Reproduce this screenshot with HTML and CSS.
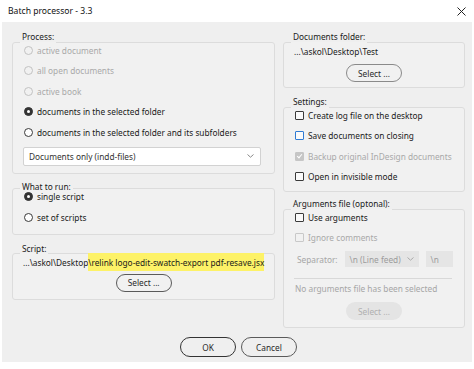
FILE: index.html
```html
<!DOCTYPE html>
<html lang="en">
  <head>
    <meta charset="UTF-8" />
    <title>Batch processor - 3.3</title>
    <link rel="stylesheet" href="styles.css">
  </head>
  <body>
    <div class="window">
      <div class="titlebar">
        <span class="title">Batch processor - 3.3</span>
        <svg class="close" width="9" height="9" viewBox="0 0 9 9">
          <path d="M0.5 0.5 L8.5 8.5 M8.5 0.5 L0.5 8.5" stroke="#222" stroke-width="1" fill="none" />
        </svg>
      </div>
      <div class="dialog">
        <div class="columns">
          <div class="col">
            <fieldset class="panel process">
              <legend>Process:</legend>
              <div class="row disabled"><span class="radio"></span>active document</div>
              <div class="row disabled"><span class="radio"></span>all open documents</div>
              <div class="row disabled"><span class="radio"></span>active book</div>
              <div class="row"><span class="radio checked"></span>documents in the selected folder</div>
              <div class="row"><span class="radio"></span>documents in the selected folder and its subfolders</div>
              <div class="dropdown">
                <span>Documents only (indd-files)</span>
                <svg class="chevron" width="7" height="4" viewBox="0 0 7 4"><path d="M0.5 0.5 L3.5 3.2 L6.5 0.5" stroke="#888" fill="none" /></svg>
              </div>
            </fieldset>

            <fieldset class="panel run">
              <legend>What to run:</legend>
              <div class="row"><span class="radio checked"></span>single script</div>
              <div class="row"><span class="radio"></span>set of scripts</div>
            </fieldset>

            <fieldset class="panel script">
              <legend>Script:</legend>
              <div class="path">...\askol\Desktop<mark>\relink logo-edit-swatch-export pdf-resave.jsx</mark></div>
              <div class="center"><button class="btn">Select ...</button></div>
            </fieldset>
          </div>

          <div class="col">
            <fieldset class="panel docs">
              <legend>Documents folder:</legend>
              <div class="path">...\askol\Desktop\Test</div>
              <div class="center"><button class="btn light">Select ...</button></div>
            </fieldset>

            <fieldset class="panel settings">
              <legend>Settings:</legend>
              <div class="row"><span class="check"></span>Create log file on the desktop</div>
              <div class="row"><span class="check focus"></span>Save documents on closing</div>
              <div class="row disabled"><span class="check checked"></span>Backup original InDesign documents</div>
              <div class="row"><span class="check"></span>Open in invisible mode</div>
            </fieldset>

            <fieldset class="panel args">
              <legend>Arguments file (optonal):</legend>
              <div class="row"><span class="check"></span>Use arguments</div>
              <div class="row disabled"><span class="check"></span>Ignore comments</div>
              <div class="sep-row">
                <span class="muted">Separator:</span>
                <span class="field select-off">\n (Line feed)
                  <svg class="chevron" width="7" height="4" viewBox="0 0 7 4"><path d="M0.5 0.5 L3.5 3.2 L6.5 0.5" stroke="#aaa" fill="none" /></svg>
                </span>
                <span class="field small-off">\n</span>
              </div>
              <div class="rule"></div>
              <div class="muted note">No arguments file has been selected</div>
              <div class="center"><button class="btn off">Select ...</button></div>
            </fieldset>
          </div>
        </div>
        <div class="footer">
          <button class="btn default">OK</button>
          <button class="btn">Cancel</button>
        </div>
      </div>
    </div>
  </body>
</html>
```

FILE: styles.css
```css
* {
  margin: 0;
  padding: 0;
  box-sizing: border-box;
}
body {
  background-color: #fff;
  font-family: "Noto Sans", "Open Sans", sans-serif;
  font-size: 8.3px;
  color: #1a1a1a;
}
.window {
  width: 474px;
  height: 369px;
  background-color: #fff;
}
.titlebar {
  height: 22px;
  display: flex;
  align-items: center;
  justify-content: space-between;
  padding: 0 8px 0 8px;
}
.title {
  font-size: 8.6px;
  color: #111;
}
.dialog {
  margin: 0 2px;
  height: 340px;
  background-color: #efefef;
  padding: 9px 7px 0 10px;
}
.columns {
  display: grid;
  grid-template-columns: 263px 182px;
  column-gap: 8px;
  align-items: start;
}
.col {
  display: flex;
  flex-direction: column;
  gap: 8px;
}
.panel {
  border: 1px solid #dcdcdc;
  border-radius: 3px;
  background-color: #f1f1f1;
  padding: 0 10px 6px 10px;
}
legend {
  margin-left: -3px;
  margin-bottom: -13px;
  padding: 0 2px 10px 2px;
  line-height: 12px;
  color: #1a1a1a;
}
.row {
  height: 20.5px;
  display: flex;
  align-items: center;
  gap: 4px;
  white-space: nowrap;
}
.disabled {
  color: #a9a9a9;
}
.radio {
  width: 9px;
  height: 9px;
  border: 1px solid #3a3a3a;
  border-radius: 50%;
  background-color: #fff;
  flex: none;
  margin-left: 1px;
}
.disabled .radio {
  border-color: #c2c2c2;
  background-color: transparent;
}
.radio.checked {
  background-color: #333;
  border-color: #333;
  position: relative;
}
.radio.checked::after {
  content: "";
  position: absolute;
  left: 2px;
  top: 2px;
  width: 3px;
  height: 3px;
  border-radius: 50%;
  background-color: #fff;
}
.check {
  width: 9px;
  height: 9px;
  border: 1px solid #3a3a3a;
  border-radius: 1px;
  background-color: #fafafa;
  flex: none;
  margin-left: 1px;
}
.check.focus {
  border-color: #2f7bd3;
}
.disabled .check {
  border-color: #c8c8c8;
  background-color: transparent;
}
.disabled .check.checked {
  background-color: #c6c6c6;
  border-color: #c6c6c6;
  position: relative;
}
.check.checked::after {
  content: "";
  position: absolute;
  left: 2px;
  top: 0px;
  width: 2px;
  height: 4px;
  border: solid #fff;
  border-width: 0 1.5px 1.5px 0;
  transform: rotate(40deg);
}
.dropdown {
  margin: 4px 3px 1px 0;
  height: 19px;
  background-color: #fff;
  border: 1px solid #d2d2d2;
  border-radius: 2px;
  display: flex;
  align-items: center;
  justify-content: space-between;
  padding: 0 6px 0 5px;
  color: #333;
}
.run legend {
  padding-bottom: 4px;
  margin-bottom: -10px;
}
.run {
  margin-top: -1px;
  padding-bottom: 6px;
}
.path {
  height: 16px;
  line-height: 16px;
  white-space: nowrap;
}
mark {
  background-color: #fdf267;
  color: #1a1a1a;
  padding: 4px 0 3px 0;
}
.center {
  display: flex;
  justify-content: center;
}
.btn {
  font-family: inherit;
  font-size: 8.3px;
  height: 18px;
  width: 56px;
  border: 1px solid #5a5a5a;
  border-radius: 9px;
  background-color: transparent;
  color: #2a2a2a;
}
.btn.light {
  border-color: #8a8a8a;
}
.btn.off {
  border: none;
  background-color: #e4e4e4;
  color: #b0b0b0;
}
.btn.default {
  border: 1.5px solid #333;
}
.script .path {
  margin-top: 3px;
}
.script .center {
  margin-top: 3px;
}
.script {
  padding-bottom: 7px;
}
.docs .path {
  margin-top: 4px;
}
.docs .center {
  margin-top: 4px;
}
.docs {
  padding-bottom: 5px;
}
.settings {
  padding-bottom: 4px;
}
.args {
  margin-top: -2px;
  padding-bottom: 7px;
}
.sep-row {
  display: flex;
  align-items: center;
  gap: 7px;
  height: 22px;
  margin-left: 3px;
}
.muted {
  color: #a6a6a6;
}
.field {
  height: 16px;
  background-color: #e5e5e5;
  color: #9c9c9c;
  display: flex;
  align-items: center;
  padding: 0 5px;
}
.select-off {
  width: 74px;
  justify-content: space-between;
}
.small-off {
  width: 27px;
}
.rule {
  height: 1px;
  background-color: #d8d8d8;
  margin: 8px 2px 0 0;
}
.note {
  height: 20px;
  line-height: 20px;
  margin-left: 1px;
}
.args .center {
  margin-top: 3px;
}
.footer {
  display: flex;
  justify-content: center;
  gap: 5px;
  margin-top: 9px;
}
.footer .btn {
  height: 20px;
  width: 56px;
  border-radius: 10px;
}
```
